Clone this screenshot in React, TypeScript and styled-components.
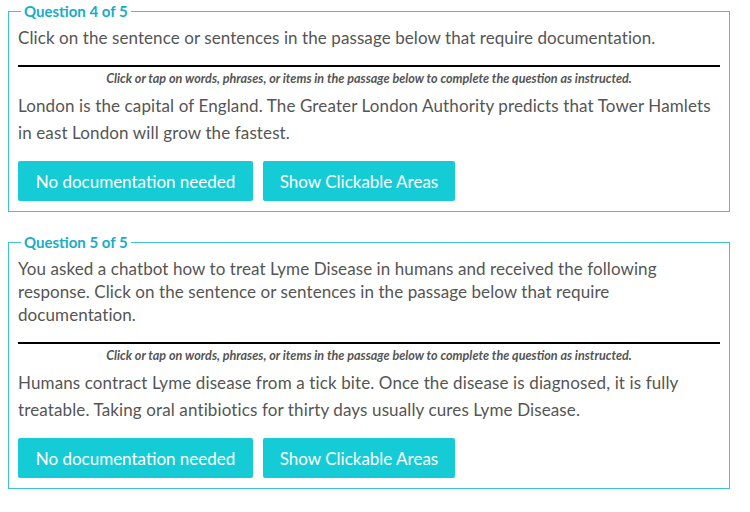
import React from "react";
import styled, { createGlobalStyle } from "styled-components";

const GlobalStyle = createGlobalStyle`
  body {
    margin: 1px 8px 8px;
    background: #fff;
    font-family: Lato, "Open Sans", sans-serif;
    color: #555;
  }
`;

const Page = styled.div`
  width: 722px;
  display: flex;
  flex-direction: column;
  gap: 20px;
`;

const Question = styled.fieldset`
  margin: 0;
  border: 1px solid #3cc3d8;
  padding: 5px 9px 10px 9px;
  min-width: 0;
`;

const Legend = styled.legend`
  padding: 0 3px;
  margin-left: 3px;
  font-size: 15px;
  font-weight: 700;
  color: #19acc7;
  line-height: 20px;
`;

const Prompt = styled.p`
  margin: 0;
  font-size: 17px;
  line-height: 23px;
  letter-spacing: 0.08px;
  color: #555;
`;

const Divider = styled.hr`
  margin: 16px 0 4px;
  border: 0;
  border-top: 2px solid #000;
`;

const Instruction = styled.div`
  text-align: center;
  font-size: 12.6px;
  font-style: italic;
  font-weight: 700;
  color: #555;
  line-height: 16px;
`;

const Passage = styled.p`
  margin: 5px 0 0;
  font-size: 17px;
  line-height: 27px;
  letter-spacing: 0.12px;
  color: #555;
`;

const Actions = styled.div`
  display: flex;
  gap: 10px;
  margin-top: 15px;
`;

const Button = styled.button<{ $w: number }>`
  width: ${(p) => p.$w}px;
  height: 40px;
  border: 0;
  border-radius: 2px;
  background: #15ccd6;
  color: #fff;
  font-family: inherit;
  font-size: 17px;
  cursor: pointer;
`;

const questions = [
  {
    label: "Question 4 of 5",
    prompt:
      "Click on the sentence or sentences in the passage below that require documentation.",
    passage:
      "London is the capital of England. The Greater London Authority predicts that Tower Hamlets in east London will grow the fastest.",
  },
  {
    label: "Question 5 of 5",
    prompt:
      "You asked a chatbot how to treat Lyme Disease in humans and received the following response. Click on the sentence or sentences in the passage below that require documentation.",
    passage:
      "Humans contract Lyme disease from a tick bite. Once the disease is diagnosed, it is fully treatable. Taking oral antibiotics for thirty days usually cures Lyme Disease.",
  },
];

const App = () => {
  return (
    <>
      <GlobalStyle />
      <Page>
        {questions.map((q) => (
          <Question key={q.label}>
            <Legend>{q.label}</Legend>
            <Prompt>{q.prompt}</Prompt>
            <Divider />
            <Instruction>
              Click or tap on words, phrases, or items in the passage below to
              complete the question as instructed.
            </Instruction>
            <Passage>{q.passage}</Passage>
            <Actions>
              <Button $w={235}>No documentation needed</Button>
              <Button $w={192}>Show Clickable Areas</Button>
            </Actions>
          </Question>
        ))}
      </Page>
    </>
  );
};

export default App;
